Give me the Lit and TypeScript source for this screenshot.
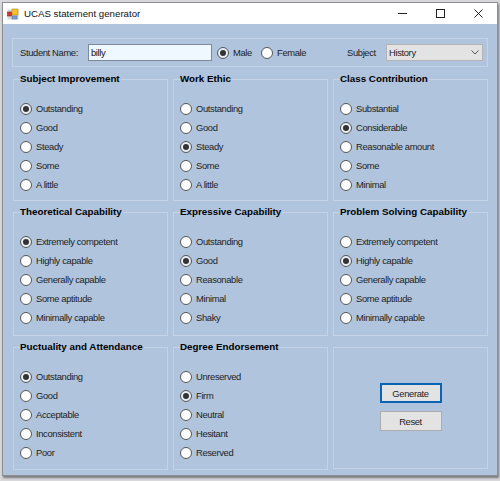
import { LitElement, html, css, svg } from "lit";
import { customElement } from "lit/decorators.js";

type G = { t: string; o: string[]; s: number };
const groups: G[] = [
  { t: "Subject Improvement", o: ["Outstanding", "Good", "Steady", "Some", "A little"], s: 0 },
  { t: "Work Ethic", o: ["Outstanding", "Good", "Steady", "Some", "A little"], s: 2 },
  { t: "Class Contribution", o: ["Substantial", "Considerable", "Reasonable amount", "Some", "Minimal"], s: 1 },
  { t: "Theoretical Capability", o: ["Extremely competent", "Highly capable", "Generally capable", "Some aptitude", "Minimally capable"], s: 0 },
  { t: "Expressive Capability", o: ["Outstanding", "Good", "Reasonable", "Minimal", "Shaky"], s: 1 },
  { t: "Problem Solving Capability", o: ["Extremely competent", "Highly capable", "Generally capable", "Some aptitude", "Minimally capable"], s: 1 },
  { t: "Puctuality and Attendance", o: ["Outstanding", "Good", "Acceptable", "Inconsistent", "Poor"], s: 0 },
  { t: "Degree Endorsement", o: ["Unreserved", "Firm", "Neutral", "Hesitant", "Reserved"], s: 1 },
];

@customElement("app-root")
export class AppRoot extends LitElement {
  static styles = css`
    :host { display: block; width: 500px; height: 481px; background: #d9d9dc; font: 9.4px "Liberation Sans", Arial, sans-serif; letter-spacing: -0.35px; color: #222; overflow: hidden; }
    * { box-sizing: border-box; }
    .win { width: 496px; height: 474px; margin: 2px 0 0 2px; border: 1px solid #8d8f94; background: #b0c4de; box-shadow: 1px 2px 2px #77797d; display: flex; flex-direction: column; }
    .title { height: 21px; background: #fff; display: flex; align-items: center; flex: none; }
    .logo { width: 12px; height: 12px; margin: 0 5px 0 4px; flex: none; }
    .cap { font-size: 9.7px; letter-spacing: 0; color: #111; flex: 1; }
    .wb { width: 38px; height: 21px; display: flex; align-items: center; justify-content: center; }
    .client { padding: 14px 9px 0 9px; display: flex; flex-direction: column; }
    .top { height: 29px; width: 476px; border: 1px solid #c4d3e6; display: flex; align-items: center; }
    .lbl { margin-left: 7px; width: 68px; flex: none; white-space: nowrap; }
    .txt { width: 124px; height: 17px; flex: none; background: #f0f8ff; border: 1px solid #7e8a9a; padding: 0 1px 0 2px; line-height: 15px; color: #111; }
    .top .r { margin-left: 5px; width: 44px; }
    .top .r.f { margin-left: 0; width: 86px; }
    .subj { width: 39px; flex: none; }
    .sel { width: 97px; height: 17px; flex: none; background: #e3e3e3; border: 1px solid #b4b4b4; display: flex; align-items: center; justify-content: space-between; padding: 0 3px 0 2px; }
    .grid { display: grid; grid-template-columns: 155px 155px 155px; column-gap: 5px; row-gap: 4px; margin-top: 5px; margin-left: 1px; grid-template-rows: 129px 131px 130px; }
    fieldset { margin: 0; padding: 0 0 0 6px; border: 1px solid #c4d3e6; min-width: 0; display: block; }
    legend { padding: 0 1px 0 0; font-weight: 700; font-size: 9.8px; letter-spacing: 0; line-height: 14px; color: #000; }
    .rows { display: flex; flex-direction: column; margin-top: 13px; }
    .r { display: flex; align-items: center; height: 19px; gap: 4px; white-space: nowrap; }
    .dot { width: 12px; height: 12px; border-radius: 50%; border: 1px solid #555; background: #fff; flex: none; display: flex; align-items: center; justify-content: center; }
    .dot.on { background: #e8eef6; }
    .dot.on::after { content: ""; width: 6px; height: 6px; border-radius: 50%; background: #333; }
    .actions { border: 1px solid #c4d3e6; margin-top: 7px; height: 122px; display: flex; flex-direction: column; align-items: center; gap: 8px; padding-top: 35px; }
    .btn { width: 62px; height: 20px; background: #e3e3e3; border: 1px solid #adadad; font: inherit; letter-spacing: inherit; color: #222; padding: 0; flex: none; }
    .btn.def { border: 2px solid #0a64b4; }
  `;

  private logo() {
    return svg`<rect x="0.5" y="1.5" width="11" height="10" fill="#d5d8de"/>
      <rect x="5" y="1" width="6" height="6" fill="#f2c230" stroke="#b08a1c" stroke-width=".6"/>
      <rect x="0.5" y="4" width="4" height="4" fill="#d0392b" stroke="#8e2a20" stroke-width=".6"/>
      <rect x="5" y="8" width="5" height="3" fill="#7f9fd0" stroke="#56749f" stroke-width=".6"/>`;
  }

  private radio(label: string, on: boolean, cls = "") {
    return html`<div class="r ${cls}"><span class="dot ${on ? "on" : ""}"></span><span>${label}</span></div>`;
  }

  private group(g: G) {
    return html`<fieldset><legend>${g.t}</legend>
      <div class="rows">${g.o.map((x, i) => this.radio(x, i === g.s))}</div></fieldset>`;
  }

  render() {
    return html`<div class="win">
      <div class="title">
        <svg class="logo" viewBox="0 0 12 12">${this.logo()}</svg>
        <span class="cap">UCAS statement generator</span>
        <div class="wb"><svg width="9" height="9" viewBox="0 0 9 9"><path d="M0 4.5h9" stroke="#222" fill="none"/></svg></div>
        <div class="wb"><svg width="9" height="9" viewBox="0 0 9 9"><rect x=".5" y=".5" width="8" height="8" stroke="#222" fill="none"/></svg></div>
        <div class="wb"><svg width="9" height="9" viewBox="0 0 9 9"><path d="M.5.5l8 8M8.5.5l-8 8" stroke="#222" fill="none"/></svg></div>
      </div>
      <div class="client">
        <div class="top">
          <span class="lbl">Student Name:</span>
          <div class="txt">billy</div>
          ${this.radio("Male", true)}
          ${this.radio("Female", false, "f")}
          <span class="subj">Subject</span>
          <div class="sel"><span>History</span>
            <svg width="8" height="5" viewBox="0 0 8 5"><path d="M.5.5l3.5 3.5 3.5-3.5" stroke="#555" fill="none"/></svg></div>
        </div>
        <div class="grid">
          ${groups.map((g) => this.group(g))}
          <div class="actions">
            <button class="btn def">Generate</button>
            <button class="btn">Reset</button>
          </div>
        </div>
      </div>
    </div>`;
  }
}
